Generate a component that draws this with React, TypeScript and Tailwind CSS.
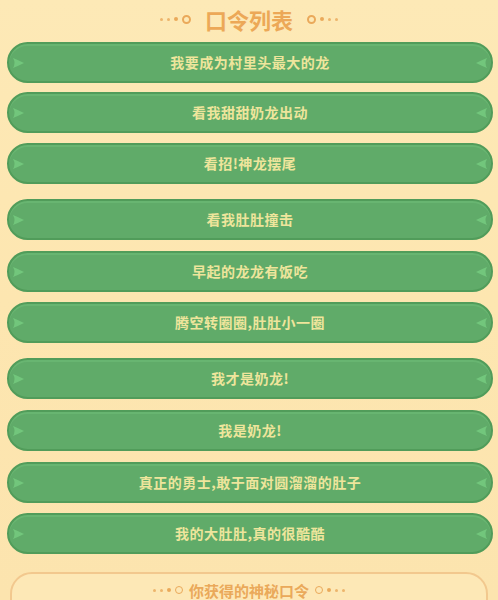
import React from 'react';

const commands = [
  { text: '我要成为村里头最大的龙', mt: 'mt-0' },
  { text: '看我甜甜奶龙出动', mt: 'mt-[9px]' },
  { text: '看招!神龙摆尾', mt: 'mt-[10px]' },
  { text: '看我肚肚撞击', mt: 'mt-[15px]' },
  { text: '早起的龙龙有饭吃', mt: 'mt-[11px]' },
  { text: '腾空转圈圈,肚肚小一圈', mt: 'mt-[10px]' },
  { text: '我才是奶龙!', mt: 'mt-[15px]' },
  { text: '我是奶龙!', mt: 'mt-[11px]' },
  { text: '真正的勇士,敢于面对圆溜溜的肚子', mt: 'mt-[11px]' },
  { text: '我的大肚肚,真的很酷酷', mt: 'mt-[10px]' },
];

function Deco({ flip, big }: { flip?: boolean; big?: boolean }) {
  const ring = big ? 'w-[9px] h-[9px] border-2' : 'w-[8px] h-[8px] border-[1.5px]';
  return (
    <div className={`flex items-center gap-[4px] ${flip ? 'flex-row-reverse' : ''}`}>
      <span className="w-[3px] h-[3px] rounded-full bg-[#edb56c]" />
      <span className="w-[3px] h-[3px] rounded-full bg-[#edb56c]" />
      <span className="w-[4px] h-[4px] rounded-full bg-[#eaa95a]" />
      <span className={`${ring} rounded-full border-[#eaa95a]`} />
    </div>
  );
}

// small lighter-green ribbon tip at each end of a pill
function Notch({ flip }: { flip?: boolean }) {
  return (
    <svg width="14" height="16" viewBox="0 0 14 16" className={flip ? 'rotate-180' : ''}>
      <path d="M1 3 Q6 5 12 8 Q6 11 1 13 Q4 8 1 3 Z" fill="#72c67c" />
    </svg>
  );
}

export default function App() {
  return (
    <div
      className="h-[600px] overflow-hidden bg-gradient-to-b from-[#fde9b6] via-[#fde6b0] to-[#fce4ae]"
      style={{ fontFamily: '"Noto Sans CJK SC", "Noto Sans", sans-serif' }}>
      <div className="h-[42px] flex items-center justify-center gap-[14px] pb-[4px]">
        <Deco big />
        <span className="text-[22px] font-bold text-[#eca857] leading-none">口令列表</span>
        <Deco flip big />
      </div>

      <div className="flex flex-col px-[7px] pr-[5px]">
        {commands.map((c) =>
        <div
          key={c.text}
          className={`${c.mt} h-[41px] rounded-full bg-[#60ab69] border-2 border-[#519c5a] shadow-[inset_0_2px_0_rgba(120,200,130,0.35)] flex items-center px-[3px]`}>
            <Notch />
            <span className="flex-1 text-center text-[14px] font-bold text-[#eee59c] tracking-[0.5px]">
              {c.text}
            </span>
            <Notch flip />
          </div>
        )}
      </div>

      <div className="mt-[18px] mx-[10px] h-[80px] rounded-t-[22px] border-2 border-[#f2c88e] bg-[#fde8b6] flex justify-center pt-[6px]">
        <div className="flex items-center gap-[6px] h-[20px]">
          <Deco />
          <span className="text-[15px] font-bold text-[#eaa95a] leading-none">你获得的神秘口令</span>
          <Deco flip />
        </div>
      </div>
    </div>);

}
